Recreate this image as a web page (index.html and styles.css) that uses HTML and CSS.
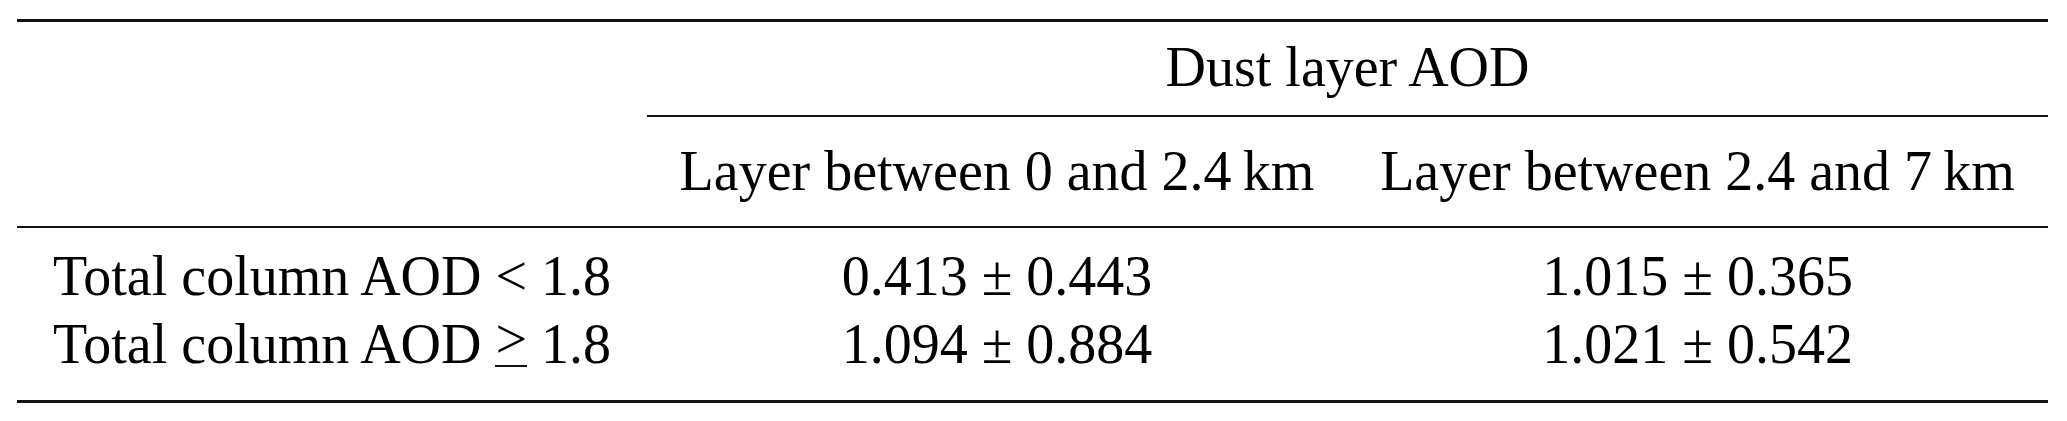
FILE: index.html
```html
<!DOCTYPE html>
<html lang="en">
<head>
<meta charset="utf-8">
<title>Dust layer AOD</title>
<link rel="stylesheet" href="styles.css">
</head>
<body>
<table class="aod-table">
  <colgroup>
    <col class="col-label">
    <col class="col-low">
    <col class="col-high">
  </colgroup>
  <thead>
    <tr class="group-row">
      <th class="blank"></th>
      <th class="group" colspan="2">Dust layer AOD</th>
    </tr>
    <tr class="sub-row">
      <th class="blank"></th>
      <th class="sub">Layer between 0 and 2.4&#8201;km</th>
      <th class="sub">Layer between 2.4 and 7&#8201;km</th>
    </tr>
  </thead>
  <tbody>
    <tr class="row-first">
      <td class="label">Total column AOD &lt; 1.8</td>
      <td class="val">0.413 ± 0.443</td>
      <td class="val">1.015 ± 0.365</td>
    </tr>
    <tr class="row-last">
      <td class="label">Total column AOD <span class="geq" aria-label="≥">&gt;</span> 1.8</td>
      <td class="val">1.094 ± 0.884</td>
      <td class="val">1.021 ± 0.542</td>
    </tr>
  </tbody>
</table>
</body>
</html>
```

FILE: styles.css
```css
html, body {
  margin: 0;
  padding: 0;
  background: #ffffff;
}

body {
  font-family: "Liberation Serif", "Times New Roman", serif;
  color: #000000;
}

.aod-table {
  margin: 19px 0 0 17px;
  width: 2031px;
  table-layout: fixed;
  border-collapse: separate;
  border-spacing: 0;
  border-top: 3px solid #111111;
  font-size: 56px;
  line-height: 62px;
}

.col-label { width: 630px; }
.col-low { width: 700px; }
.col-high { width: 701px; }

.aod-table th,
.aod-table td {
  padding: 0 0;
  font-weight: normal;
  white-space: nowrap;
  text-align: center;
}

.group-row th {
  padding-top: 14px;
  padding-bottom: 17px;
}

.group-row .group {
  border-bottom: 2px solid #111111;
}

.sub-row th {
  padding-top: 23px;
  padding-bottom: 24px;
  border-bottom: 2px solid #111111;
}

.row-first td {
  padding-top: 17px;
  padding-bottom: 0;
}

.row-last td {
  padding-top: 6px;
  padding-bottom: 25px;
  border-bottom: 3px solid #111111;
}

.aod-table .label {
  text-align: left;
  padding-left: 36px;
}

/* TeX-style "greater than or equal": > with a straight bar beneath */
.geq {
  display: inline-block;
  height: 40px;
  line-height: 40px;
  padding-bottom: 6px;
  border-bottom: 2px solid #111111;
  vertical-align: 5px;
}
```
